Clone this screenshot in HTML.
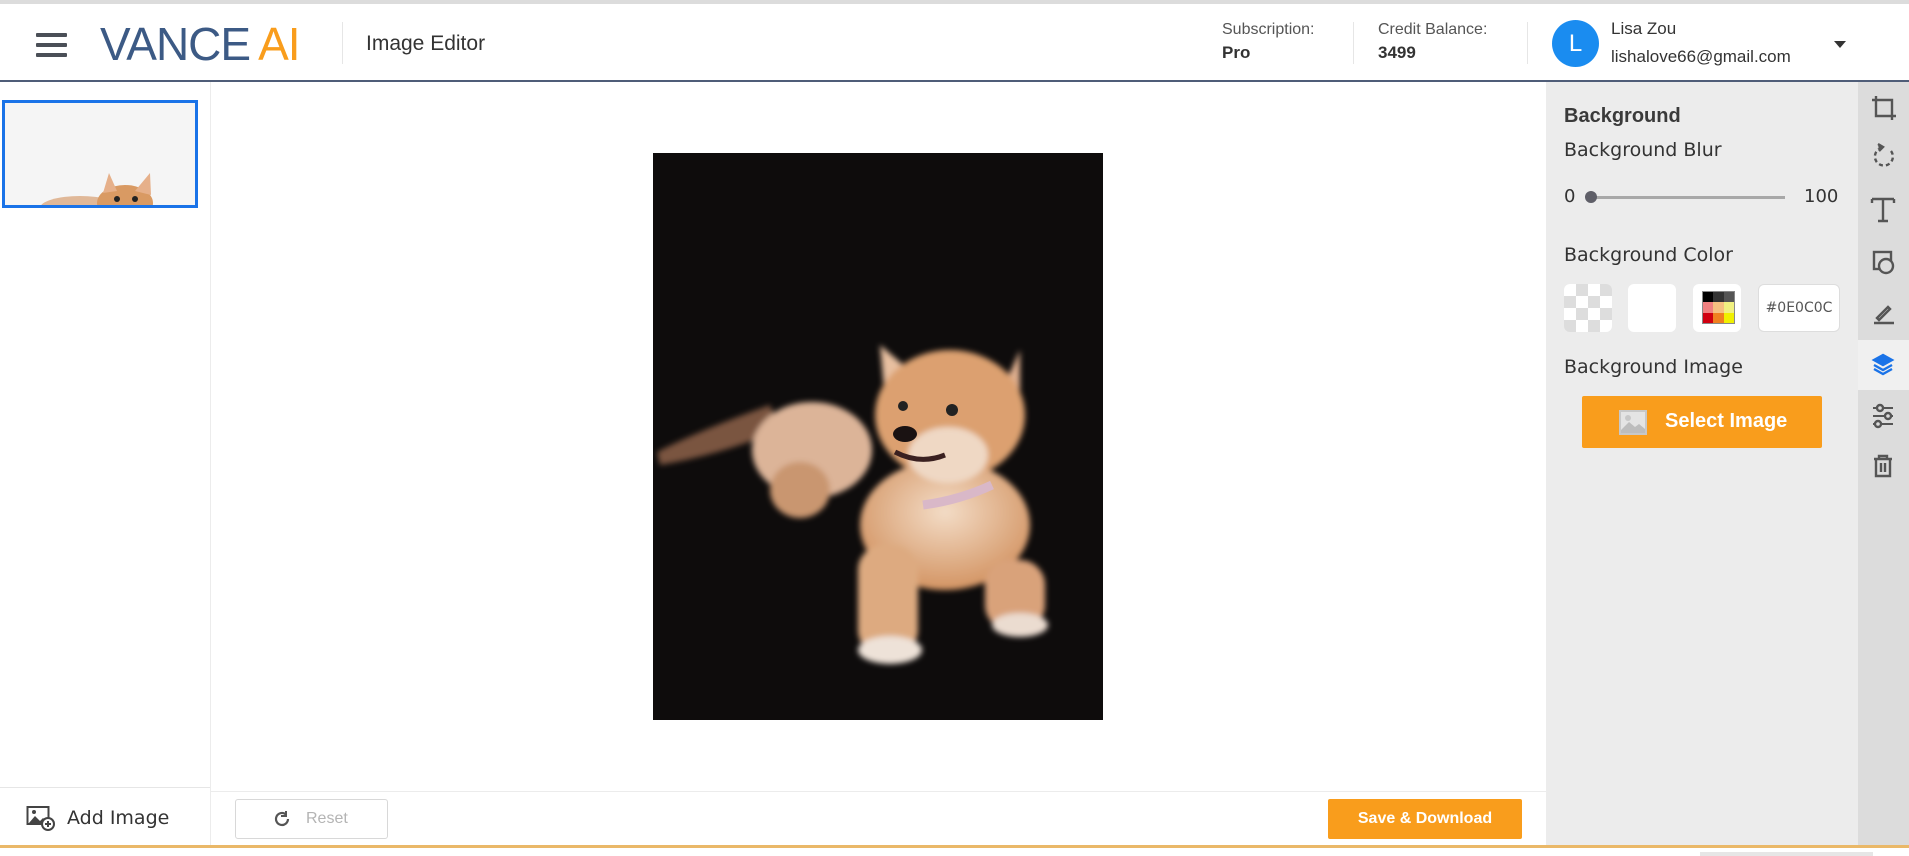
<!DOCTYPE html>
<html><head><meta charset="utf-8"><style>
*{margin:0;padding:0;box-sizing:border-box}
body{width:1909px;height:856px;position:relative;background:#fff;font-family:"Liberation Sans",sans-serif;overflow:hidden;color:#333}
.a{position:absolute}
</style></head><body>
<div class="a" style="left:0;top:0;width:1909px;height:4px;background:#dcdcdc"></div>
<!-- header -->
<div class="a" style="left:36px;top:33px;width:31px;height:4px;background:#4a4f57;border-radius:1px"></div>
<div class="a" style="left:36px;top:43px;width:31px;height:4px;background:#4a4f57;border-radius:1px"></div>
<div class="a" style="left:36px;top:53px;width:31px;height:4px;background:#4a4f57;border-radius:1px"></div>
<div class="a" style="left:100px;top:20px;font-size:46px;letter-spacing:-1px;color:#3c5a85;line-height:48px">VANCE<span style="color:#f99d1c;margin-left:8px">AI</span></div>
<div class="a" style="left:342px;top:22px;width:1px;height:42px;background:#e6e6e6"></div>
<div class="a" style="left:366px;top:32px;font-size:21px;color:#333">Image Editor</div>
<div class="a" style="left:1222px;top:21px;font-size:16px;color:#555">Subscription:</div>
<div class="a" style="left:1222px;top:43px;font-size:17px;font-weight:bold;color:#333">Pro</div>
<div class="a" style="left:1353px;top:22px;width:1px;height:42px;background:#e6e6e6"></div>
<div class="a" style="left:1378px;top:21px;font-size:16px;color:#555">Credit Balance:</div>
<div class="a" style="left:1378px;top:43px;font-size:17px;font-weight:bold;color:#333">3499</div>
<div class="a" style="left:1527px;top:22px;width:1px;height:42px;background:#e6e6e6"></div>
<div class="a" style="left:1552px;top:20px;width:47px;height:47px;border-radius:50%;background:#1a8cf0;color:#fff;font-size:24px;text-align:center;line-height:47px">L</div>
<div class="a" style="left:1611px;top:19px;font-size:17px;color:#333">Lisa Zou</div>
<div class="a" style="left:1611px;top:47px;font-size:17px;color:#333">lishalove66@gmail.com</div>
<div class="a" style="left:1834px;top:41px;width:0;height:0;border-left:6px solid transparent;border-right:6px solid transparent;border-top:7px solid #333"></div>
<div class="a" style="left:0;top:80px;width:1909px;height:2px;background:#4f5d78"></div>
<!-- left sidebar -->
<div class="a" style="left:210px;top:82px;width:1px;height:764px;background:#ececec"></div>
<div class="a" style="left:2px;top:100px;width:196px;height:108px;border:3px solid #1a73e8;background:#f5f5f5;overflow:hidden">
<svg width="190" height="102" style="position:absolute;left:0;top:0"><ellipse cx="75" cy="105" rx="40" ry="12" fill="#e0b898"/><ellipse cx="120" cy="100" rx="28" ry="18" fill="#d99a63"/><polygon points="98,90 104,70 112,88" fill="#e6b08a"/><polygon points="130,88 145,70 146,92" fill="#e6b08a"/><circle cx="112" cy="96" r="3" fill="#222"/><circle cx="130" cy="96" r="3" fill="#222"/></svg>
</div>
<div class="a" style="left:0;top:787px;width:210px;height:1px;background:#e6e6e6"></div>
<svg class="a" style="left:26px;top:805px" width="30" height="26" viewBox="0 0 30 26"><rect x="1.5" y="2" width="21" height="17" fill="none" stroke="#444" stroke-width="2"/><path d="M3 18l6-7 5 5 3-3 5 5z" fill="#444"/><circle cx="8" cy="7" r="2" fill="#444"/><circle cx="22" cy="19" r="6" fill="#fff" stroke="#444" stroke-width="2"/><path d="M22 16v6M19 19h6" stroke="#444" stroke-width="2"/></svg>
<div class="a" style="left:67px;top:807px;font-size:19px;color:#333;font-family:'DejaVu Sans',sans-serif">Add Image</div>
<!-- canvas -->
<div class="a" style="left:653px;top:153px;width:450px;height:567px;background:#0e0c0c;overflow:hidden">
<svg width="450" height="567" viewBox="653 153 450 567"><defs><filter id="b"><feGaussianBlur stdDeviation="3"/></filter><radialGradient id="g" cx="50%" cy="40%" r="60%"><stop offset="0" stop-color="#f3dcc6"/><stop offset="1" stop-color="#d39463"/></radialGradient></defs>
<g filter="url(#b)">
<path d="M657 452 Q700 430 770 405 L780 430 Q720 455 660 465Z" fill="#7a5440"/>
<ellipse cx="812" cy="450" rx="60" ry="48" fill="#dcb498"/>
<ellipse cx="800" cy="490" rx="30" ry="28" fill="#c99670"/>
<polygon points="880,345 915,375 885,400" fill="#e8c0a0"/>
<polygon points="1020,350 1000,395 1020,405" fill="#e0b090"/>
<ellipse cx="950" cy="415" rx="75" ry="65" fill="#dca070"/>
<ellipse cx="945" cy="525" rx="85" ry="65" fill="url(#g)"/>
<rect x="858" y="545" width="60" height="110" rx="25" fill="#ddaa80"/>
<ellipse cx="890" cy="650" rx="32" ry="14" fill="#eee2d8"/>
<rect x="985" y="560" width="60" height="70" rx="25" fill="#d9a27a"/>
<ellipse cx="1020" cy="625" rx="28" ry="12" fill="#ebdcd0"/>
<ellipse cx="948" cy="455" rx="40" ry="28" fill="#efd8c4"/>
</g>
<circle cx="903" cy="406" r="5" fill="#222"/><circle cx="952" cy="410" r="6" fill="#222"/><ellipse cx="905" cy="434" rx="12" ry="8" fill="#1a1212"/><path d="M895 452 Q920 465 945 455" stroke="#3a2020" stroke-width="5" fill="none"/>
<path d="M923 505 Q960 500 992 485" stroke="#d9b8c8" stroke-width="9" fill="none"/>
</svg></div>
<!-- bottom bar -->
<div class="a" style="left:211px;top:791px;width:1335px;height:1px;background:#ececec"></div>
<div class="a" style="left:235px;top:799px;width:153px;height:40px;border:1px solid #d8d8d8;border-radius:3px;color:#b4b4b4;font-size:16px;line-height:38px;padding-left:70px">Reset</div>
<svg class="a" style="left:273px;top:810px" width="18" height="18" viewBox="0 0 18 18"><path d="M15 9a6 6 0 1 1-2-4.5" fill="none" stroke="#555" stroke-width="2.2"/><path d="M13 1v5h-5" fill="none" stroke="#555" stroke-width="2"/></svg>
<div class="a" style="left:1328px;top:799px;width:194px;height:40px;background:#f99d1c;border-radius:2px;color:#fff;font-size:16px;font-weight:bold;text-align:center;line-height:40px">Save &amp; Download</div>
<div class="a" style="left:0;top:845px;width:1909px;height:3px;background:#eab868"></div>
<div class="a" style="left:1700px;top:852px;width:173px;height:4px;background:#e6e6e6"></div>
<!-- right panel -->
<div class="a" style="left:1546px;top:82px;width:312px;height:763px;background:#ececec"></div>
<div class="a" style="left:1858px;top:82px;width:51px;height:763px;background:#dcdcdc"></div>
<div class="a" style="left:1858px;top:340px;width:51px;height:50px;background:#f0f0f0"></div>
<div class="a" style="left:1564px;top:105px;font-size:20px;font-weight:bold;color:#3a3a3a">Background</div>
<div class="a" style="left:1564px;top:139px;font-size:19px;color:#333;font-family:'DejaVu Sans',sans-serif">Background Blur</div>
<div class="a" style="left:1564px;top:186px;font-size:18px;color:#333;font-family:'DejaVu Sans',sans-serif">0</div>
<div class="a" style="left:1591px;top:196px;width:194px;height:3px;background:#a8a8a8"></div>
<div class="a" style="left:1585px;top:191px;width:12px;height:12px;border-radius:50%;background:#5f5f68"></div>
<div class="a" style="left:1804px;top:186px;font-size:18px;color:#333;font-family:'DejaVu Sans',sans-serif">100</div>
<div class="a" style="left:1564px;top:244px;font-size:19px;color:#333;font-family:'DejaVu Sans',sans-serif">Background Color</div>
<div class="a" style="left:1564px;top:284px;width:48px;height:48px;border-radius:6px;overflow:hidden;background:conic-gradient(#ddd 0 25%,#fff 0 50%,#ddd 0 75%,#fff 0) 0 0/24px 24px"></div>
<div class="a" style="left:1628px;top:284px;width:48px;height:48px;border-radius:6px;background:#fff"></div>
<div class="a" style="left:1693px;top:284px;width:48px;height:48px;border-radius:6px;background:#fff"></div>
<div class="a" style="left:1702px;top:291px;width:33px;height:33px;border:1px solid #888;display:grid;grid-template-columns:1fr 1fr 1fr">
<i style="background:#000"></i><i style="background:#333"></i><i style="background:#555"></i>
<i style="background:#f08080"></i><i style="background:#f6c080"></i><i style="background:#f0f080"></i>
<i style="background:#d00010"></i><i style="background:#f08020"></i><i style="background:#f0f000"></i></div>
<div class="a" style="left:1758px;top:284px;width:82px;height:48px;border-radius:6px;background:#fff;border:1px solid #ddd;font-size:14px;color:#555;text-align:center;line-height:46px;font-family:'DejaVu Sans',sans-serif">#0E0C0C</div>
<div class="a" style="left:1564px;top:356px;font-size:19px;color:#333;font-family:'DejaVu Sans',sans-serif">Background Image</div>
<div class="a" style="left:1582px;top:396px;width:240px;height:52px;background:#f99d1c;border-radius:2px"></div>
<svg class="a" style="left:1619px;top:410px" width="28" height="25" viewBox="0 0 28 25"><rect width="28" height="25" fill="#c8c8c8"/><rect x="2" y="2" width="24" height="21" fill="#e4e4e4"/><path d="M2 20l8-8 6 5 4-3 6 5v4H2z" fill="#bdbdbd"/><circle cx="9" cy="8" r="3" fill="#c8c8c8"/></svg>
<div class="a" style="left:1665px;top:410px;font-size:20px;font-weight:bold;color:#fff">Select Image</div>
<!-- icons -->
<svg class="a" style="left:1858px;top:82px" width="51" height="400" viewBox="0 82 51 400" fill="none" stroke="#555" stroke-width="2.4">
<path d="M18 96v20h20M14 100h20v20"/>
<path d="M33 151a9 9 0 1 1-12-2" stroke-dasharray="4 3"/><path d="M20 144l5 3-4 4" fill="#555"/>
<path d="M14 199h22M25 199v22M20 221h10M14 199v4M36 199v4"/>
<rect x="16" y="252" width="17" height="17"/><circle cx="28" cy="266" r="7" fill="#dcdcdc"/>
<path d="M16 323h20M19 318l11-11 2 2-11 11z"/>
<path d="M25 355l-9 5 9 5 9-5z" fill="#1a73e8" stroke="#1a73e8"/><path d="M16 365l9 5 9-5" stroke="#1a73e8"/><path d="M16 369l9 5 9-5" stroke="#1a73e8"/>
<path d="M15 408h20M15 416h20M15 424h20" stroke-width="2"/><circle cx="22" cy="408" r="3" fill="#dcdcdc"/><circle cx="30" cy="416" r="3" fill="#dcdcdc"/><circle cx="20" cy="424" r="3" fill="#dcdcdc"/>
<path d="M16 459h18M21 459v-3h8v3M18 459v17h14v-17M23 463v9M27 463v9"/>
</svg>
</body></html>
